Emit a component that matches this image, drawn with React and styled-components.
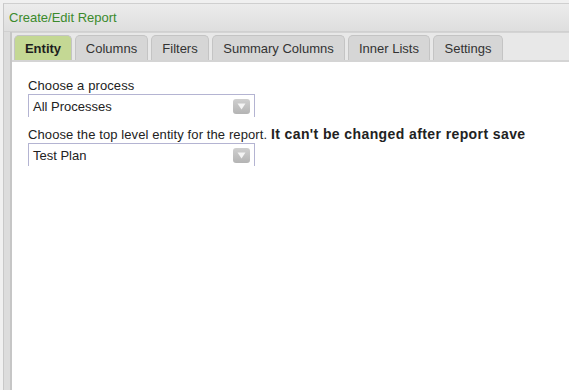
import React from "react";
import styled, { createGlobalStyle } from "styled-components";

const Global = createGlobalStyle`
  html, body { margin: 0; padding: 0; background: #f0f0f0; }
  body { font-family: Arial, "Liberation Sans", sans-serif; font-size: 13px; color: #222; }
  #root { height: 390px; overflow: hidden; }
`;

const Frame = styled.div`
  margin: 3px 0 0 3px;
  height: 400px;
  border-left: 1px solid #c8c8c8;
  border-top: 1px solid #cfcfcf;
  background: #dcdcdc;
  display: flex;
  flex-direction: column;
`;

const Header = styled.div`
  height: 27px;
  padding-left: 5px;
  display: flex;
  align-items: center;
  background: linear-gradient(#ececec, #dedede);
  border-bottom: 1px solid #d0d0d0;
  color: #3b8a2c;
  font-size: 13px;
`;

const Panel = styled.div`
  flex: 1;
  margin-left: 6px;
  border-left: 2px solid #c6c6c6;
  display: flex;
  flex-direction: column;
  background: #fff;
`;

const TabBar = styled.div`
  display: flex;
  gap: 3px;
  padding: 2px 0 0 2px;
  height: 25px;
  background: #e8e8e8;
  border-top: 1px solid #d4d4d4;
  border-bottom: 2px solid #d4d4d4;
`;

const Tab = styled.div`
  display: flex;
  align-items: center;
  justify-content: center;
  width: ${p => p.$w}px;
  border: 1px solid #c4c4c4;
  border-bottom: none;
  border-radius: 5px 5px 0 0;
  background: ${p => (p.$active ? "#c4d894" : "#d6d6d6")};
  color: ${p => (p.$active ? "#1e1e1e" : "#333")};
  font-weight: ${p => (p.$active ? "bold" : "normal")};
  font-size: 13px;
  box-sizing: border-box;
`;

const Content = styled.div`
  flex: 1;
  padding: 16px 0 0 16px;
`;

const Label = styled.div`
  font-size: 13px;
  line-height: 16px;
  color: #222;
  white-space: nowrap;
  letter-spacing: 0.1px;
`;

const Strong = styled.b`
  font-weight: bold;
  font-size: 14px;
  letter-spacing: 0.4px;
`;

const Select = styled.div`
  width: 227px;
  height: 23px;
  box-sizing: border-box;
  border: 1px solid #b4b4d2;
  border-bottom: none;
  display: flex;
  align-items: center;
  justify-content: space-between;
  padding: 0 4px;
  margin-bottom: 9px;
  font-size: 13px;
`;

const Arrow = styled.div`
  width: 17px;
  height: 15px;
  border-radius: 3px;
  background: linear-gradient(#cfcfcf, #b4b4b4);
  display: flex;
  align-items: center;
  justify-content: center;
`;

const tabs = [
  { name: "Entity", active: true, w: 58 },
  { name: "Columns", w: 73 },
  { name: "Filters", w: 58 },
  { name: "Summary Columns", w: 133 },
  { name: "Inner Lists", w: 82 },
  { name: "Settings", w: 70 },
];

function DropArrow() {
  return (
    <Arrow>
      <svg width="9" height="7" viewBox="0 0 9 7">
        <path d="M0.5 0.5 L8.5 0.5 L4.5 6.5 Z" fill="#f4f4f4" />
      </svg>
    </Arrow>
  );
}

export default function App() {
  return (
    <>
      <Global />
      <Frame>
        <Header>Create/Edit Report</Header>
        <Panel>
          <TabBar>
            {tabs.map(t => (
              <Tab key={t.name} $active={t.active} $w={t.w}>
                {t.name}
              </Tab>
            ))}
          </TabBar>
          <Content>
            <Label>Choose a process</Label>
            <Select>
              <span>All Processes</span>
              <DropArrow />
            </Select>
            <Label>
              Choose the top level entity for the report. <Strong>It can't be changed after report save</Strong>
            </Label>
            <Select>
              <span>Test Plan</span>
              <DropArrow />
            </Select>
          </Content>
        </Panel>
      </Frame>
    </>
  );
}
